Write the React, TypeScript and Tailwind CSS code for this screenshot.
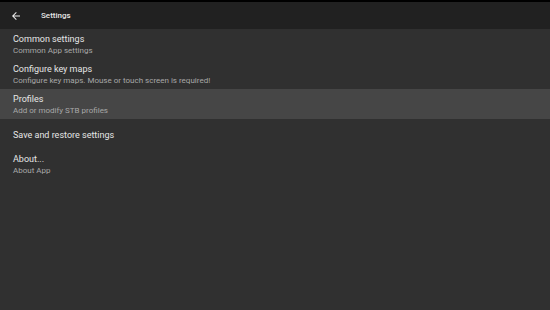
import React from "react";

type Pref = { title: string; summary?: string; selected?: boolean };

const prefs: Pref[] = [
  { title: "Common settings", summary: "Common App settings" },
  {
    title: "Configure key maps",
    summary: "Configure key maps. Mouse or touch screen is required!",
  },
  { title: "Profiles", summary: "Add or modify STB profiles", selected: true },
  { title: "Save and restore settings" },
  { title: "About...", summary: "About App" },
];

function PrefItem({ pref }: { pref: Pref }) {
  return (
    <div
      className={`h-[30px] px-[13px] pt-[1px] flex flex-col justify-center ${
        pref.selected ? "bg-[#464646]" : ""
      }`}
    >
      <span className="text-[9px] leading-[12px] text-[#e6e6e6]">
        {pref.title}
      </span>
      {pref.summary && (
        <span className="text-[8px] leading-[11px] text-[#a8a8a8]">
          {pref.summary}
        </span>
      )}
    </div>
  );
}

export default function App() {
  return (
    <div
      className="w-[550px] h-[310px] bg-[#303030] flex flex-col overflow-hidden"
      style={{ fontFamily: "Roboto, 'Liberation Sans', sans-serif" }}
    >
      <div className="h-[2px] bg-black" />
      <div className="h-[27px] bg-[#212121] flex items-center">
        <svg
          viewBox="0 0 24 24"
          className="w-[12px] h-[12px] ml-[10px] fill-[#eeeeee]"
        >
          <path d="M20 11H7.83l5.59-5.59L12 4l-8 8 8 8 1.41-1.41L7.83 13H20v-2z" />
        </svg>
        <span className="ml-[19px] text-[8px] font-medium text-[#e6e6e6]">
          Settings
        </span>
      </div>
      <div className="flex flex-col">
        {prefs.map((p) => (
          <PrefItem key={p.title} pref={p} />
        ))}
      </div>
    </div>
  );
}
